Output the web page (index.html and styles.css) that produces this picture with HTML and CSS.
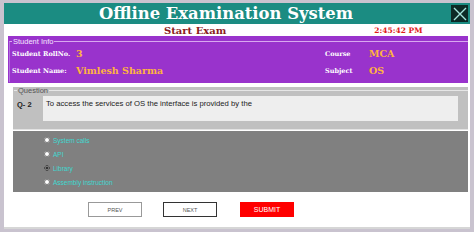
FILE: index.html
```html
<!DOCTYPE html>
<html lang="en">
<head>
  <meta charset="UTF-8" />
  <title>Offline Examination System</title>
  <link rel="stylesheet" href="styles.css">
</head>
<body>
  <div class="window">
    <header class="title-bar">
      <h1>Offline Examination System</h1>
      <button class="close-btn" aria-label="Close">
        <svg width="14" height="14" viewBox="0 0 14 14"><path d="M1 1 L13 13 M13 1 L1 13" stroke="#a6e6de" stroke-width="1.4"/></svg>
      </button>
    </header>

    <div class="sub-bar">
      <span class="page-name">Start Exam</span>
      <span class="clock" id="clock">2:45:42 PM</span>
    </div>

    <div class="student-info">
      <fieldset>
        <legend>Student Info</legend>
        <div class="info-grid">
          <span class="label">Student RollNo.</span><span class="value">3</span>
          <span class="label">Course</span><span class="value">MCA</span>
          <span class="label">Student Name:</span><span class="value">Vimlesh Sharma</span>
          <span class="label">Subject</span><span class="value">OS</span>
        </div>
      </fieldset>
    </div>

    <div class="question">
      <fieldset>
        <legend>Question</legend>
        <div class="q-row">
          <span class="q-no">Q- 2</span>
          <div class="q-text">To access the services of OS the interface is provided by the</div>
        </div>
      </fieldset>
    </div>

    <div class="options">
      <label><input type="radio" name="ans"> System calls</label>
      <label><input type="radio" name="ans"> API</label>
      <label><input type="radio" name="ans" checked> Library</label>
      <label><input type="radio" name="ans"> Assembly instruction</label>
    </div>

    <div class="actions">
      <button class="btn">PREV</button>
      <button class="btn next">NEXT</button>
      <button class="btn submit">SUBMIT</button>
    </div>
  </div>
</body>
</html>
```

FILE: styles.css
```css
* { margin: 0; padding: 0; box-sizing: border-box; }
body {
  background: #c9c3cf;
  font-family: 'Liberation Sans', Arial, sans-serif;
  height: 232px;
  overflow: hidden;
}
.window {
  margin: 3px 4px 0 4px;
  background: #fff;
  height: 226px;
  border-bottom: 2px solid #d6d6d6;
}
.title-bar {
  background: #1b8c82;
  height: 21px;
  display: flex;
  justify-content: center;
  align-items: center;
  padding-right: 22px;
  position: relative;
}
.title-bar h1 {
  color: #fff;
  font-family: 'DejaVu Serif', serif;
  font-size: 16.4px;
  font-weight: bold;
  line-height: 21px;
}
.close-btn {
  position: absolute;
  right: 2px;
  top: 2px;
  width: 17px;
  height: 17px;
  background: #0c2a26;
  border: none;
  display: flex;
  align-items: center;
  justify-content: center;
}
.sub-bar {
  height: 12px;
  display: flex;
  align-items: center;
  font-family: 'DejaVu Serif', serif;
  font-weight: bold;
}
.page-name {
  color: #8b1c1c;
  font-size: 10px;
  margin-left: 160px;
}
.clock {
  color: #e01a1a;
  font-size: 7.5px;
  margin-left: 148px;
}
fieldset {
  border: none;
  min-width: 0;
}
legend {
  font-size: 7.5px;
  line-height: 7px;
  padding: 0 1px;
}
.student-info {
  margin: 0 2px 0 4px;
  background: #9933cc;
  height: 47px;
  padding: 2px 0 0 1px;
}
.student-info fieldset {
  border-top: 1px solid #d9a8f0;
  border-left: 1px solid #b070dd;
  height: 44px;
  padding: 0 2px;
}
.student-info legend { color: #f4e6ff; }
.info-grid {
  display: grid;
  grid-template-columns: 64px 249px 44px 1fr;
  grid-template-rows: 13px 13px;
  row-gap: 4px;
  align-items: center;
  padding-top: 2px;
  font-family: 'DejaVu Serif', serif;
  font-weight: bold;
}
.label {
  color: #fff;
  font-size: 6.5px;
}
.value {
  color: #ffb340;
  font-size: 9.5px;
}
.question {
  margin: 4px 2px 0 9px;
  background: #c0c0c0;
  height: 43px;
  padding: 0 0 0 1px;
  border-bottom: 1px solid #e2e2e2;
}
.question fieldset {
  border-top: 1px solid #e6e6e6;
  padding: 0 10px 0 3px;
}
.question legend { color: #555; }
.q-row {
  display: flex;
  align-items: flex-start;
  padding-top: 2px;
}
.q-no {
  font-size: 7.5px;
  font-weight: bold;
  color: #222;
  width: 26px;
  padding-top: 4px;
}
.q-text {
  flex: 1;
  background: #eeeeee;
  height: 25px;
  font-size: 7.7px;
  color: #222;
  padding: 3px 3px;
}
.options {
  margin: 1px 2px 0 9px;
  background: #808080;
  height: 61px;
  display: flex;
  flex-direction: column;
  padding: 4px 0 0 31px;
  gap: 4px;
}
.options label {
  color: #3fd8d0;
  font-size: 6.5px;
  display: flex;
  align-items: center;
  gap: 3px;
  height: 10px;
}
.options input {
  width: 6px;
  height: 6px;
  accent-color: #333;
}
.actions {
  display: flex;
  padding: 10px 0 0 84px;
}
.btn {
  width: 54px;
  height: 15px;
  background: #fff;
  border: 1px solid #999;
  font-size: 5.5px;
  color: #555;
  margin-right: 21px;
}
.btn.next {
  border-color: #333;
  margin-right: 23px;
}
.btn.submit {
  background: #f00;
  border-color: #f00;
  color: #fff;
  font-size: 7px;
}
```
